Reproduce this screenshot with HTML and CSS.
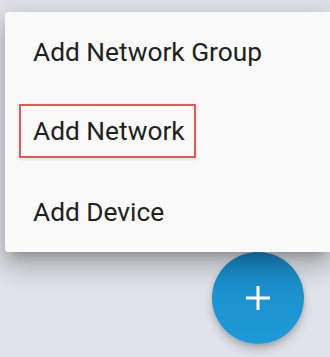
FILE: index.html
```html
<!DOCTYPE html>
<html>
<head>
<meta charset="utf-8">
<link rel="stylesheet" href="styles.css">
</head>
<body>
<div class="menu">
  <div class="item">Add Network Group</div>
  <div class="item"><span class="hl">Add Network</span></div>
  <div class="item">Add Device</div>
</div>
<div class="fab-row">
  <button class="fab" aria-label="Add">
    <svg width="26" height="26" viewBox="0 0 26 26"><path d="M13 1V25M1 13H25" stroke="#fff" stroke-width="3" fill="none"/></svg>
  </button>
</div>
</body>
</html>
```
FILE: styles.css
```css
html, body {
  margin: 0;
  padding: 0;
  background: #e0e4ea;
  overflow: hidden;
  height: 357px;
}
body {
  font-family: Roboto, "Liberation Sans", sans-serif;
}
.menu {
  margin: 12px 0 0 5px;
  background: #fafafa;
  border-radius: 3px 0 0 3px;
  box-shadow: 0 8px 10px -5px rgba(0,0,0,.22), 0 16px 24px 2px rgba(0,0,0,.14), 0 6px 30px 5px rgba(0,0,0,.12);
  position: relative;
  z-index: 1;
}
.item {
  height: 80px;
  display: flex;
  align-items: center;
  padding-left: 28px;
  font-size: 26.3px;
  color: #212121;
  line-height: 26px;
}
.hl {
  border: 2px solid #e05a5a;
  padding: 12px 9px 12px 12px;
  margin-left: -14px;
  margin-top: -2px;
  box-shadow: 0 1px 3px rgba(0,0,0,.15);
}
.fab-row {
  padding-left: 212px;
}
.fab {
  width: 92px;
  height: 92px;
  border-radius: 50%;
  border: none;
  padding: 0;
  background: linear-gradient(#1a8bc7, #1f9ad8);
  display: flex;
  align-items: center;
  justify-content: center;
  box-shadow: 0 6px 10px rgba(0,0,0,.18), 0 2px 4px rgba(0,0,0,.12);
}
```
